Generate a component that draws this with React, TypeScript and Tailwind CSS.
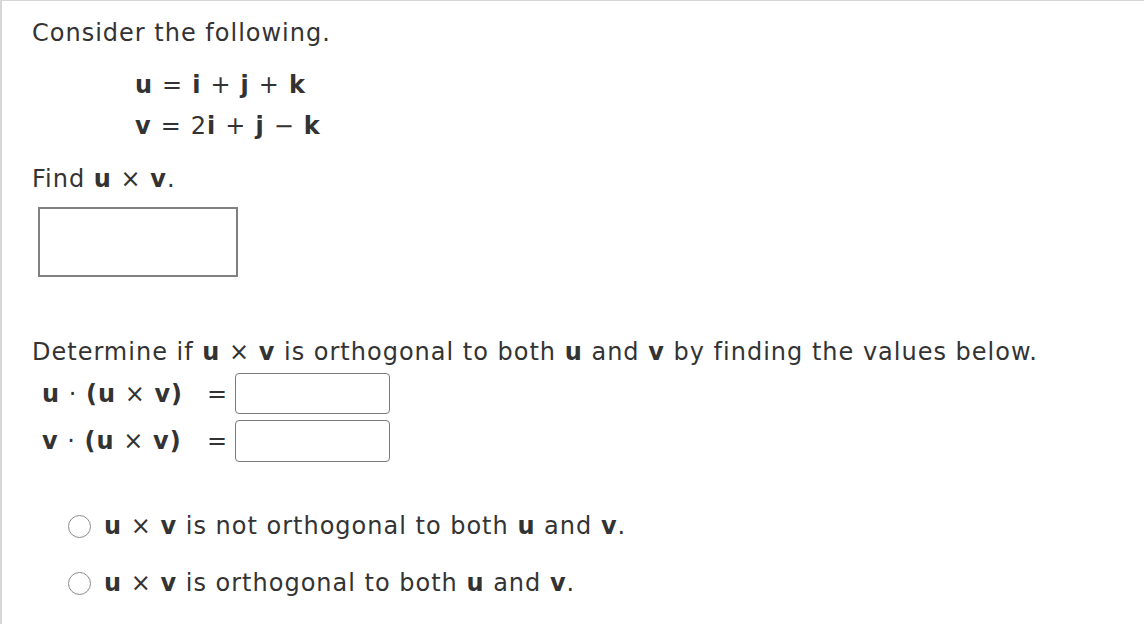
import React from 'react';

const font = { fontFamily: '"DejaVu Sans", Verdana, sans-serif' };

function B({ children }: { children: React.ReactNode }) {
  return <span className="font-bold">{children}</span>;
}

function Op({ children }: { children: React.ReactNode }) {
  return <span className="mx-[9px]">{children}</span>;
}

function Radio({ children }: { children: React.ReactNode }) {
  return (
    <label className="flex items-center h-[32px]">
      <span className="w-[23px] h-[23px] rounded-full border-[1.5px] border-[#8c8c8c] bg-white shrink-0" />
      <span className="ml-[13px]">{children}</span>
    </label>
  );
}

export default function App() {
  return (
    <div
      style={font}
      className="w-[1144px] h-[624px] bg-white border-l-2 border-t border-[#d6d6d6] text-[#333333] text-[24px] tracking-[1px] pl-[30px] pt-[16px] overflow-hidden"
    >
      <p className="leading-[32px]">Consider the following.</p>

      <div className="ml-[103px] mt-[16px] leading-[41px]">
        <div>
          <B>u</B>
          <Op>=</Op>
          <B>i</B>
          <Op>+</Op>
          <B>j</B>
          <Op>+</Op>
          <B>k</B>
        </div>
        <div>
          <B>v</B>
          <Op>=</Op>
          2<B>i</B>
          <Op>+</Op>
          <B>j</B>
          <Op>−</Op>
          <B>k</B>
        </div>
      </div>

      <p className="leading-[32px] mt-[16px]">
        Find <B>u</B> × <B>v</B>.
      </p>

      <div className="ml-[6px] mt-[12px] w-[200px] h-[70px] border-2 border-[#808080] bg-white" />

      <p className="leading-[32px] mt-[59px]">
        Determine if <B>u</B> × <B>v</B> is orthogonal to both <B>u</B> and <B>v</B> by finding the values below.
      </p>

      <div className="ml-[10px] mt-[5px] flex flex-col gap-[6px]">
        <div className="flex items-center">
          <span className="w-[165px] whitespace-nowrap">
            <B>u</B> · <B>(u</B> × <B>v)</B>
          </span>
          <span className="w-[28px]">=</span>
          <div className="w-[155px] h-[41px] border-[1.5px] border-[#7a7a7a] rounded-[4px] bg-white" />
        </div>
        <div className="flex items-center">
          <span className="w-[165px] whitespace-nowrap">
            <B>v</B> · <B>(u</B> × <B>v)</B>
          </span>
          <span className="w-[28px]">=</span>
          <div className="w-[155px] h-[42px] border-[1.5px] border-[#7a7a7a] rounded-[4px] bg-white" />
        </div>
      </div>

      <div className="ml-[36px] mt-[48px] flex flex-col gap-[25px]">
        <Radio>
          <B>u</B> × <B>v</B> is not orthogonal to both <B>u</B> and <B>v</B>.
        </Radio>
        <Radio>
          <B>u</B> × <B>v</B> is orthogonal to both <B>u</B> and <B>v</B>.
        </Radio>
      </div>
    </div>
  );
}
